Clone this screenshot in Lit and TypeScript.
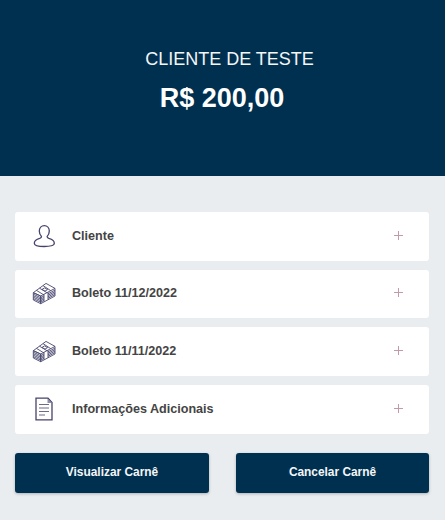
import { LitElement, html, css, svg } from "lit";
import { customElement } from "lit/decorators.js";

const person = svg`<path fill="none" stroke="#45436b" stroke-width="1.300" stroke-linejoin="round" d="M12.300 1.700c-2.900 0-5 2.300-5 5.400 0 2.200.9 4.200 2.200 5.300 0 1-.6 1.600-1.800 2-3.200.9-5.400 2.500-5.400 4.800 0 2.300 4.500 3.300 10 3.300s10-1 10-3.300c0-2.300-2.200-3.900-5.400-4.800-1.200-.4-1.800-1-1.800-2 1.300-1.100 2.200-3.100 2.200-5.300 0-3.100-2.100-5.400-5-5.400z"/>`;

const money = svg`<g fill="none" stroke="#4a4870" stroke-width=".9" stroke-linejoin="round">
  <path d="M1.300 10.700 14 1.400 23 6.400 8.700 14z"/>
  <path d="M1.300 10.700V18l7.400 3.700V14z"/>
  <path d="M1.300 12.200 8.700 15.700M1.300 13.700 8.700 17.200M1.300 15.200 8.700 18.700M1.300 16.700 8.700 20.200"/>
  <path d="M8.700 14v7.700L23 14V6.400"/>
  <path d="M8.700 15.700l3.300-1.800M8.700 17.200l3.300-1.800M8.700 18.700l3.300-1.800M8.700 20.200l3.300-1.800"/>
  <path d="M16 11.800l7-3.700M16 13.300l7-3.700M16 14.800l7-3.700M16 16.300l7-3.700"/>
  <path d="M12 12.300v7.400M16 10.200v7.400"/>
  <path d="M4.500 8.400 12 13M7.500 6.200 15.300 10.900M11 3.600 18.800 8.700"/>
  <path d="M12.600 5.900l3 1.700-2.600 1.500-3-1.700z"/>
</g>`;

const doc = svg`<g fill="none" stroke="#45436b" stroke-width="1.300" stroke-linejoin="miter"><path d="M4 1.200h12l4 4.300v17.300H4z"/></g><path d="M15.500 1.500v4.500h4.500z" fill="#8f8da8"/><g stroke="#6d6b8c" stroke-width="1.100"><path d="M7 7.500h10M7 11h10M7 14.500h10M7 18h6"/></g>`;

const rows = [
  { label: "Cliente", icon: person },
  { label: "Boleto 11/12/2022", icon: money },
  { label: "Boleto 11/11/2022", icon: money },
  { label: "Informações Adicionais", icon: doc },
];

@customElement("app-root")
export class AppRoot extends LitElement {
  static styles = css`
    :host {
      display: block;
      width: 445px;
      height: 520px;
      background: #e9edf0;
      font-family: "Liberation Sans", Arial, sans-serif;
      overflow: hidden;
    }
    .head {
      height: 176px;
      box-sizing: border-box;
      background: #00304f;
      color: #fff;
      display: flex;
      flex-direction: column;
      align-items: center;
      padding-top: 49px;
    }
    .name {
      font-size: 18px;
      line-height: 21px;
      color: #f4f6f8;
      margin-left: 14px;
    }
    .value {
      font-size: 27px;
      font-weight: 700;
      line-height: 31px;
      margin-top: 13px;
      margin-right: 1px;
    }
    .list {
      display: flex;
      flex-direction: column;
      gap: 9px;
      padding: 36px 16px 0 15px;
    }
    .row {
      height: 48.67px;
      background: #fff;
      border-radius: 3px;
      display: flex;
      align-items: center;
      padding-left: 17px;
      color: #444;
      font-size: 12.600px;
      font-weight: 700;
    }
    .row svg {
      width: 24px;
      height: 24px;
      flex: none;
    }
    .label {
      margin: -1px 0 0 16px;
      flex: 1;
    }
    .plus {
      width: 9px;
      height: 9px;
      margin: -2px 26px 0 0;
      flex: none;
      background:
        linear-gradient(#c49aa8, #c49aa8) center / 100% 1px no-repeat,
        linear-gradient(#c49aa8, #c49aa8) center / 1px 100% no-repeat;
    }
    .actions {
      display: flex;
      justify-content: space-between;
      padding: 19px 16px 0 15px;
    }
    button {
      width: 194px;
      height: 40px;
      border: 0;
      border-radius: 3px;
      background: #00304f;
      color: #f4f6f8;
      font: 700 11.900px "Liberation Sans", Arial, sans-serif;
      box-shadow: 0 1px 3px rgba(0, 0, 0, 0.25);
      padding: 0 0 2px;
    }
    button + button {
      width: 193px;
    }
  `;

  render() {
    return html`
      <div class="head">
        <div class="name">CLIENTE DE TESTE</div>
        <div class="value">R$ 200,00</div>
      </div>
      <div class="list">
        ${rows.map(
          (r) => html`<div class="row">
            <svg viewBox="0 0 24 24">${r.icon}</svg>
            <span class="label">${r.label}</span>
            <span class="plus"></span>
          </div>`
        )}
      </div>
      <div class="actions">
        <button>Visualizar Carnê</button>
        <button>Cancelar Carnê</button>
      </div>
    `;
  }
}
